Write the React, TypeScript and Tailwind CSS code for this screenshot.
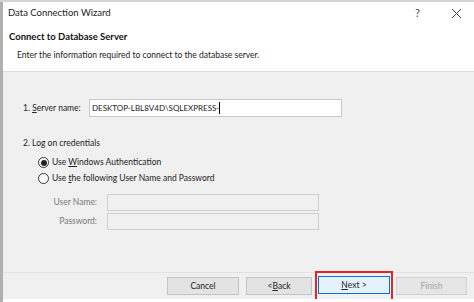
import React from "react";

function Radio({ checked }: { checked?: boolean }) {
  return (
    <span className="w-[11px] h-[11px] rounded-full border border-[#333] bg-white flex items-center justify-center">
      {checked && <span className="w-[6px] h-[6px] rounded-full bg-[#222]" />}
    </span>
  );
}

function Btn({
  children,
  w,
  primary,
  disabled,
}: {
  children: React.ReactNode;
  w: string;
  primary?: boolean;
  disabled?: boolean;
}) {
  return (
    <div
      className={`${w} h-[18px] flex items-center justify-center text-[8.5px] ${
        primary
          ? "border border-[#0078d7] bg-[#e5f1fb] text-[#222]"
          : disabled
          ? "border border-[#d2d2d2] bg-[#e6e6e6] text-[#a4a4a4]"
          : "border border-[#c4c4c4] bg-[#e3e3e3] text-[#222]"
      }`}
    >
      {children}
    </div>
  );
}

export default function App() {
  return (
    <div
      className="w-[474px] h-[302px] bg-white flex flex-col overflow-hidden whitespace-nowrap"
      style={{ fontFamily: 'Lato, "Noto Sans", sans-serif' }}
    >
      <div className="h-[2px] bg-[#d4d4d4]" />
      <div className="flex-1 flex flex-col border-l-[3px] border-[#b0b0b0]">
        {/* title bar */}
        <div className="h-[23px] flex items-center pl-[5px] text-[9.5px] text-[#222]">
          <span>Data Connection Wizard</span>
          <span className="ml-auto text-[11px] text-[#444] mr-[31px]">?</span>
          <svg width="11" height="11" viewBox="0 0 11 11" className="mr-[12px]">
            <path d="M1 1L10 10M10 1L1 10" stroke="#444" strokeWidth="1" />
          </svg>
        </div>

        {/* header */}
        <div className="h-[47px] flex flex-col border-b border-[#dcdcdc]">
          <div className="pl-[6px] pt-[5px] text-[9.5px] font-bold text-[#111]">
            Connect to Database Server
          </div>
          <div className="pl-[14px] pt-[5px] text-[8.5px] text-[#222]">
            Enter the information required to connect to the database server.
          </div>
        </div>

        {/* body */}
        <div className="flex-1 bg-[#f0f0f0] flex flex-col pl-[20px] pt-[27px] text-[8.5px] text-[#222]">
          <div className="flex items-center h-[18px]">
            <span className="w-[66px]">
              1. <span className="underline">S</span>erver name:
            </span>
            <div className="w-[253px] h-[18px] bg-white border border-[#c8c8c8] flex items-center pl-[2px] text-[8px]">
              DESKTOP-LBL8V4D\SQLEXPRESS-
              <span className="w-px h-[12px] bg-black" />
            </div>
          </div>

          <div className="mt-[20px]">2. Log on credentials</div>

          <div className="flex flex-col pl-[15px] mt-[7px] gap-[4px]">
            <div className="flex items-center gap-[3px] h-[12px]">
              <Radio checked />
              <span>
                Use <span className="underline">W</span>indows Authentication
              </span>
            </div>
            <div className="flex items-center gap-[3px] h-[12px]">
              <Radio />
              <span>
                Use <span className="underline">t</span>he following User Name and Password
              </span>
            </div>
          </div>

          <div className="flex flex-col gap-[2px] mt-[9px] text-[#7a7a7a]">
            <div className="flex items-center">
              <span className="w-[74px] text-right">User Name:</span>
              <div className="ml-[10px] w-[212px] h-[17px] border border-[#cfcfcf] bg-[#f0f0f0]" />
            </div>
            <div className="flex items-center">
              <span className="w-[74px] text-right">Password:</span>
              <div className="ml-[10px] w-[212px] h-[17px] border border-[#cfcfcf] bg-[#f0f0f0]" />
            </div>
          </div>
        </div>

        {/* footer */}
        <div className="h-[27px] bg-[#f0f0f0] border-t border-[#e2e2e2] flex items-start pt-[4px] pl-[164px]">
          <Btn w="w-[72px]">Cancel</Btn>
          <div className="ml-[7px]">
            <Btn w="w-[66px]">
              &lt; <span className="underline">B</span>ack
            </Btn>
          </div>
          <div className="ml-[3px] -mt-[6px] border-2 border-[#e0262b] pt-[3px] pb-[5px] px-[1px]">
            <Btn w="w-[72px]" primary>
              <span className="underline">N</span>ext &gt;
            </Btn>
          </div>
          <div className="ml-[3px]">
            <Btn w="w-[71px]" disabled>
              Finish
            </Btn>
          </div>
        </div>
        <div className="h-[3px] bg-white" />
      </div>
    </div>
  );
}
